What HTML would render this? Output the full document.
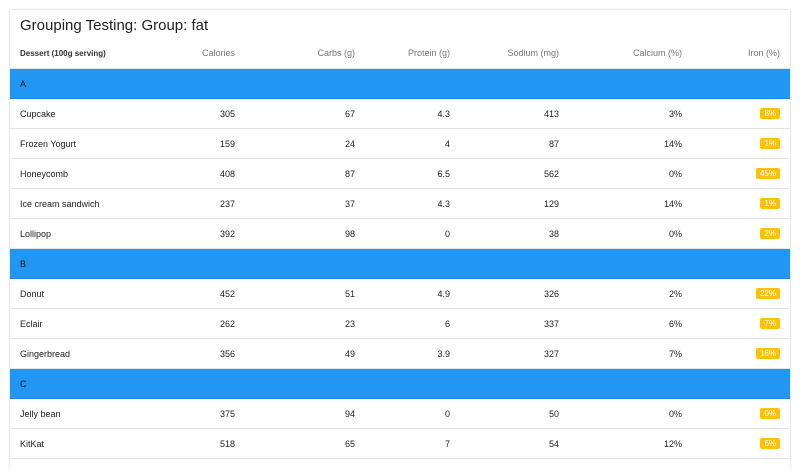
<!DOCTYPE html>
<html><head><style>
body{margin:0;background:#fff;font-family:"Liberation Sans",Arial,sans-serif;width:800px;height:450px;overflow:hidden}
.card{position:absolute;left:10px;top:10px;width:780px;height:460px;background:#fff;box-shadow:0 0 2px rgba(0,0,0,.25)}
h1{margin:0;position:absolute;left:10px;top:7px;font-size:15px;font-weight:normal;color:#222}
table{position:absolute;top:28px;left:0;width:780px;border-collapse:collapse;font-size:9px;color:#222;table-layout:fixed}
td,th{height:29px;padding:0;border-bottom:1px solid #e4e4e4;text-align:right;white-space:nowrap}
th{font-weight:normal;color:#777;height:30px}
th:first-child{font-weight:bold;color:#333;font-size:8px}
td:first-child,th:first-child{text-align:left;padding-left:10px}
td:last-child,th:last-child{padding-right:10px}
tr.g td{background:#2196f3;color:#111;border-bottom:1px solid #1e88e5}
.b{display:inline-block;background:#ffc107;color:#fff;border-radius:2px;padding:1px 4px;font-size:8px}
</style></head><body>
<div class="card"><h1>Grouping Testing: Group: fat</h1>
<table>
<colgroup><col style="width:100px"><col style="width:125px"><col style="width:120px"><col style="width:95px"><col style="width:109px"><col style="width:123px"><col style="width:108px"></colgroup>
<tr><th>Dessert (100g serving)</th><th>Calories</th><th>Carbs (g)</th><th>Protein (g)</th><th>Sodium (mg)</th><th>Calcium (%)</th><th>Iron (%)</th></tr>
<tr class="g"><td colspan="7">A</td></tr>
<tr><td>Cupcake</td><td>305</td><td>67</td><td>4.3</td><td>413</td><td>3%</td><td><span class="b">8%</span></td></tr>
<tr><td>Frozen Yogurt</td><td>159</td><td>24</td><td>4</td><td>87</td><td>14%</td><td><span class="b">1%</span></td></tr>
<tr><td>Honeycomb</td><td>408</td><td>87</td><td>6.5</td><td>562</td><td>0%</td><td><span class="b">45%</span></td></tr>
<tr><td>Ice cream sandwich</td><td>237</td><td>37</td><td>4.3</td><td>129</td><td>14%</td><td><span class="b">1%</span></td></tr>
<tr><td>Lollipop</td><td>392</td><td>98</td><td>0</td><td>38</td><td>0%</td><td><span class="b">2%</span></td></tr>
<tr class="g"><td colspan="7">B</td></tr>
<tr><td>Donut</td><td>452</td><td>51</td><td>4.9</td><td>326</td><td>2%</td><td><span class="b">22%</span></td></tr>
<tr><td>Eclair</td><td>262</td><td>23</td><td>6</td><td>337</td><td>6%</td><td><span class="b">7%</span></td></tr>
<tr><td>Gingerbread</td><td>356</td><td>49</td><td>3.9</td><td>327</td><td>7%</td><td><span class="b">16%</span></td></tr>
<tr class="g"><td colspan="7">C</td></tr>
<tr><td>Jelly bean</td><td>375</td><td>94</td><td>0</td><td>50</td><td>0%</td><td><span class="b">0%</span></td></tr>
<tr><td>KitKat</td><td>518</td><td>65</td><td>7</td><td>54</td><td>12%</td><td><span class="b">6%</span></td></tr>
</table></div>
</body></html>
